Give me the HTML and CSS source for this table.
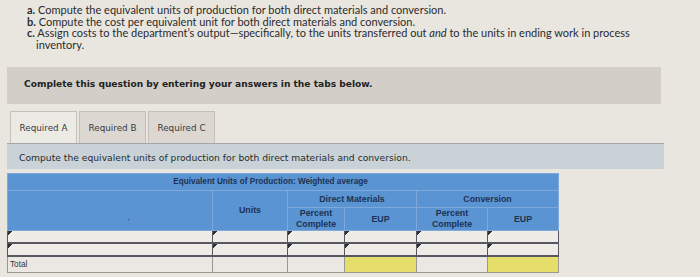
FILE: index.html
```html
<!DOCTYPE html>
<html lang="en">
<head>
<meta charset="UTF-8">
<meta name="viewport" content="width=device-width, initial-scale=1.0">
<title>Equivalent Units</title>
<link rel="stylesheet" href="styles.css">
</head>
<body>
    <div class="instructions">
        <p><b>a.</b> Compute the equivalent units of production for both direct materials and conversion.</p>
        <p><b>b.</b> Compute the cost per equivalent unit for both direct materials and conversion.</p>
        <p><b>c.</b> Assign costs to the department’s output—specifically, to the units transferred out <i>and</i> to the units in ending work in process</p>
        <p class="indent">inventory.</p>
    </div>

    <div class="prompt-band">Complete this question by entering your answers in the tabs below.</div>

    <div class="tabs">
        <div class="tab active">Required A</div>
        <div class="tab">Required B</div>
        <div class="tab">Required C</div>
    </div>

    <div class="task-band">Compute the equivalent units of production for both direct materials and conversion.</div>

    <table class="eup">
        <colgroup>
            <col class="c-label">
            <col class="c-units">
            <col class="c-pct">
            <col class="c-eup">
            <col class="c-pct2">
            <col class="c-eup2">
        </colgroup>
        <tr class="h1">
            <th colspan="6"><span class="title">Equivalent Units of Production: Weighted average</span></th>
        </tr>
        <tr class="h2">
            <th rowspan="2"><span class="dot">·</span></th>
            <th rowspan="2">Units</th>
            <th colspan="2">Direct Materials</th>
            <th colspan="2">Conversion</th>
        </tr>
        <tr class="h3">
            <th>Percent<br>Complete</th>
            <th>EUP</th>
            <th>Percent<br>Complete</th>
            <th>EUP</th>
        </tr>
        <tr class="entry">
            <td class="in"></td>
            <td class="in"></td>
            <td class="in"></td>
            <td class="in"></td>
            <td class="in"></td>
            <td class="in"></td>
        </tr>
        <tr class="entry">
            <td class="in"></td>
            <td class="in"></td>
            <td class="in"></td>
            <td class="in"></td>
            <td class="in"></td>
            <td class="in"></td>
        </tr>
        <tr class="total">
            <td>Total</td>
            <td></td>
            <td></td>
            <td class="calc"></td>
            <td></td>
            <td class="calc"></td>
        </tr>
    </table>
</body>
</html>
```

FILE: styles.css
```css
body {
    margin: 0;
    background-color: #e9e6e0;
    font-family: 'Lato', 'Liberation Sans', sans-serif;
    color: #2b2b2e;
}

.instructions {
    padding: 4px 0 0 27px;
    font-size: 11px;
    line-height: 11.7px;
}
.instructions p {
    margin: 0;
}
.instructions .indent {
    padding-left: 9px;
}

.prompt-band {
    margin: 16px 0 0 7px;
    width: 654px;
    height: 37px;
    box-sizing: border-box;
    padding-left: 17px;
    background-color: #d3cfc8;
    font-family: 'DejaVu Sans', sans-serif;
    font-weight: bold;
    font-size: 9.1px;
    line-height: 35px;
    color: #222;
}

.tabs {
    display: flex;
    gap: 2px;
    margin: 7px 0 0 10px;
}
.tab {
    width: 67px;
    height: 32px;
    box-sizing: border-box;
    border: 1px solid #c4c0b9;
    border-bottom: none;
    background-color: #dcd8d1;
    font-family: 'DejaVu Sans', sans-serif;
    font-size: 8.8px;
    line-height: 32px;
    text-align: center;
    color: #3a3a3e;
}
.tab.active {
    background-color: #eceae5;
}

.task-band {
    margin-left: 7px;
    width: 657px;
    height: 26px;
    box-sizing: border-box;
    padding-left: 12px;
    border-top: 1px solid #a3a7aa;
    background-color: #c8d2d7;
    font-family: 'DejaVu Sans', sans-serif;
    font-size: 9.2px;
    line-height: 27px;
    color: #2a2c30;
}

.eup {
    margin: 4px 0 0 7px;
    border-collapse: collapse;
    table-layout: fixed;
    width: 551px;
    font-family: 'Liberation Sans', Arial, sans-serif;
    font-size: 8.8px;
}
.c-label { width: 205px; }
.c-units { width: 75px; }
.c-pct { width: 57px; }
.c-eup { width: 72px; }
.c-pct2 { width: 71px; }
.c-eup2 { width: 71px; }

.eup th {
    background-color: #5b94d3;
    color: #1c3253;
    font-weight: bold;
    border: 1px solid #7ea9da;
    padding: 0;
    line-height: 10.5px;
}
.eup .h1 th {
    height: 16px;
    font-size: 8.2px;
}
.eup .title {
    padding-right: 25px;
}
.eup .h2 th {
    height: 16px;
}
.eup .h3 th {
    height: 22px;
}
.eup .dot {
    display: inline-block;
    margin: 20px 0 0 38px;
    color: #37597f;
}

.eup td {
    padding: 0 2px;
    border: 1px solid #9a9894;
    background-color: #ebe8e3;
    color: #333;
    font-size: 8.2px;
}
.eup .entry td {
    height: 11px;
    border: 1px solid #55585f;
    border-bottom-width: 2px;
    background: linear-gradient(135deg, #2e3138 3px, transparent 3px) no-repeat, #efece7;
}
.eup .total td {
    height: 15px;
}
.eup .total td.calc {
    background-color: #e5de6b;
}
```
